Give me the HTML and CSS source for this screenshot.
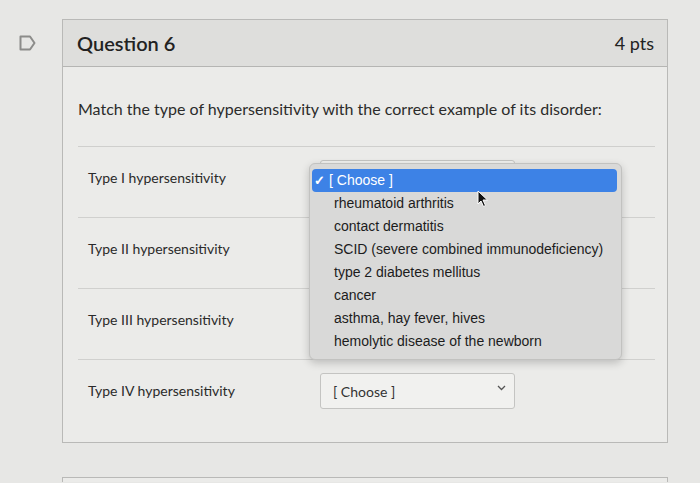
FILE: index.html
```html
<!DOCTYPE html>
<html lang="en">
<head>
    <meta charset="UTF-8">
    <meta name="viewport" content="width=device-width, initial-scale=1.0">
    <title>Question 6</title>
    <link rel="stylesheet" href="styles.css">
</head>
<body>

    <div class="page">
        <div class="gutter">
            <svg class="bookmark" width="17" height="16" viewBox="0 0 17 16">
                <path d="M1.5 1.5 H11 L15.5 8 L11 14.5 H1.5 Z" fill="none" stroke="#8c8c8a" stroke-width="2" stroke-linejoin="round"/>
            </svg>
        </div>

        <div class="column">
            <div class="question">
                <div class="question-header">
                    <h2>Question 6</h2>
                    <span class="pts">4 pts</span>
                </div>

                <div class="question-body">
                    <p class="prompt">Match the type of hypersensitivity with the correct example of its disorder:</p>

                    <div class="match-row">
                        <div class="match-label">Type I hypersensitivity</div>
                        <div class="select"></div>
                    </div>
                    <div class="match-row">
                        <div class="match-label">Type II hypersensitivity</div>
                        <div class="select"></div>
                    </div>
                    <div class="match-row">
                        <div class="match-label">Type III hypersensitivity</div>
                        <div class="select"></div>
                    </div>
                    <div class="match-row last">
                        <div class="match-label">Type IV hypersensitivity</div>
                        <div class="select">
                            [ Choose ]
                            <svg class="chevron" width="9" height="6" viewBox="0 0 9 6">
                                <path d="M1 1 L4.5 4.5 L8 1" fill="none" stroke="#555" stroke-width="1.3"/>
                            </svg>
                        </div>
                    </div>
                </div>

                <!-- open popup menu of the first select -->
                <div class="menu">
                    <div class="menu-item selected"><span class="check">✓</span>[ Choose ]</div>
                    <div class="menu-item">rheumatoid arthritis</div>
                    <div class="menu-item">contact dermatitis</div>
                    <div class="menu-item">SCID (severe combined immunodeficiency)</div>
                    <div class="menu-item">type 2 diabetes mellitus</div>
                    <div class="menu-item">cancer</div>
                    <div class="menu-item">asthma, hay fever, hives</div>
                    <div class="menu-item">hemolytic disease of the newborn</div>
                </div>

                <svg class="cursor" width="12" height="18" viewBox="0 0 12 18">
                    <path d="M1 1 L1 14 L4 11 L6.5 16.5 L8.5 15.5 L6 10 L10.5 10 Z" fill="#111" stroke="#fff" stroke-width="1"/>
                </svg>
            </div>

            <div class="question next"></div>
        </div>
    </div>

</body>
</html>
```

FILE: styles.css
```css
html, body {
    height: 483px;
    overflow: hidden;
}
body {
    margin: 0;
    padding: 0;
    background: #e7e7e5;
    font-family: Lato, 'Open Sans', sans-serif;
    color: #2b2b2b;
}
.page {
    display: flex;
    padding-top: 19px;
}
.gutter {
    width: 62px;
    padding-top: 16px;
    padding-left: 19px;
    box-sizing: border-box;
}
.column {
    width: 606px;
}
.question {
    position: relative;
    border: 1px solid #b9b9b7;
    background: #ebebe9;
}
.question-header {
    display: flex;
    justify-content: space-between;
    align-items: center;
    height: 46px;
    padding: 0 13px 0 14px;
    background: #dededc;
    border-bottom: 1px solid #b5b5b3;
}
h2 {
    margin: 0;
    font-size: 20px;
    font-weight: 600;
    color: #222;
}
.pts {
    font-size: 18px;
    color: #222;
}
.question-body {
    padding: 33px 12px 20px 15px;
}
.prompt {
    margin: 0 0 28px 0;
    font-size: 16px;
    line-height: 18px;
}
.question-body .prompt + .match-row {
    border-top: 1px solid #cfcfcd;
}
.match-row {
    display: flex;
    align-items: flex-start;
    height: 70px;
    border-bottom: 1px solid #d0d0ce;
}
.match-row.last {
    border-bottom: none;
    height: 62px;
}
.match-label {
    width: 232px;
    padding-left: 10px;
    padding-top: 22px;
    font-size: 14px;
    line-height: 17px;
    color: #2a2a2a;
}
.select {
    position: relative;
    margin-top: 13px;
    width: 195px;
    height: 36px;
    box-sizing: border-box;
    padding: 9px 0 0 12px;
    border: 1px solid #c4c4c2;
    border-radius: 3px;
    background: #f1f1ef;
    font-size: 14px;
    color: #333;
}
.chevron {
    position: absolute;
    right: 8px;
    top: 11px;
}
.menu {
    position: absolute;
    left: 246px;
    top: 143px;
    width: 313px;
    box-sizing: border-box;
    padding: 5px 4px 6px 2px;
    background: #d9d9d8;
    border: 1px solid #c2c2c0;
    border-radius: 6px;
    box-shadow: 0 3px 8px rgba(0, 0, 0, 0.2);
    font-family: 'Liberation Sans', Arial, sans-serif;
    font-size: 14px;
    color: #1c1c1c;
}
.menu-item {
    height: 23px;
    line-height: 23px;
    padding-left: 22px;
    white-space: nowrap;
}
.menu-item.selected {
    position: relative;
    background: #3d82e6;
    color: #fff;
    border-radius: 4px;
    padding-left: 17px;
}
.check {
    position: absolute;
    left: 2px;
    top: 0;
    font-size: 13px;
    font-weight: bold;
}
.cursor {
    position: absolute;
    left: 414px;
    top: 170px;
}
.question.next {
    margin-top: 34px;
    height: 4px;
    border-bottom: none;
}
```
